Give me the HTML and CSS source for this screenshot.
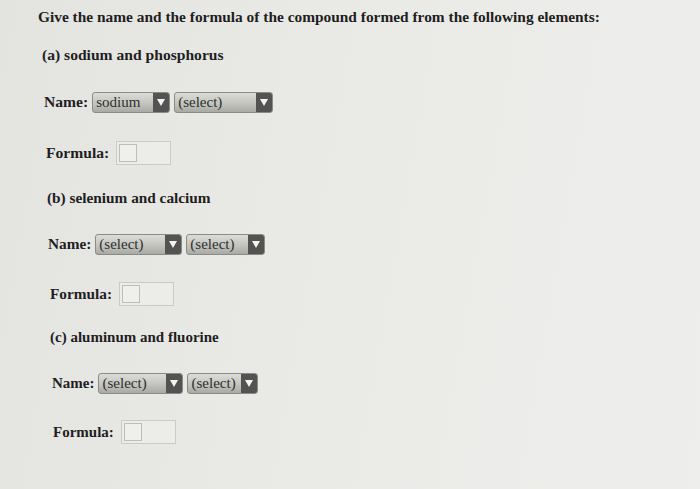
FILE: index.html
```html
<!DOCTYPE html>
<html>
<head>
<meta charset="utf-8">
<link rel="stylesheet" href="styles.css">
</head>
<body>
<div class="page">
  <div class="row r-title">Give the name and the formula of the compound formed from the following elements:</div>

  <div class="row r-part s0">(a) sodium and phosphorus</div>
  <div class="row r-name s1">
    <span class="label">Name:</span>
    <span class="sel w-a1"><span class="txt">sodium</span><span class="arr"></span></span>
    <span class="sel w-a2"><span class="txt">(select)</span><span class="arr"></span></span>
  </div>
  <div class="row r-form s2">
    <span class="label">Formula:</span>
    <span class="fbox"><span class="fin"></span></span>
  </div>

  <div class="row r-part2 s3 small">(b) selenium and calcium</div>
  <div class="row r-name s4 small">
    <span class="label">Name:</span>
    <span class="sel w-b1"><span class="txt">(select)</span><span class="arr"></span></span>
    <span class="sel w-b2"><span class="txt">(select)</span><span class="arr"></span></span>
  </div>
  <div class="row r-form2 s5 small">
    <span class="label">Formula:</span>
    <span class="fbox"><span class="fin"></span></span>
  </div>

  <div class="row r-part3 s6 smaller">(c) aluminum and fluorine</div>
  <div class="row r-name3 s7 smaller">
    <span class="label">Name:</span>
    <span class="sel w-c1"><span class="txt">(select)</span><span class="arr"></span></span>
    <span class="sel w-c2"><span class="txt">(select)</span><span class="arr"></span></span>
  </div>
  <div class="row r-form3 s8 smaller">
    <span class="label">Formula:</span>
    <span class="fbox"><span class="fin"></span></span>
  </div>
</div>
</body>
</html>
```

FILE: styles.css
```css
html, body {
  margin: 0;
  padding: 0;
}
body {
  width: 700px;
  height: 489px;
  overflow: hidden;
  background: linear-gradient(100deg, #e3e3e0 0%, #e9e9e6 40%, #eeeeec 100%);
  font-family: "Liberation Serif", "Times New Roman", serif;
  font-weight: bold;
  color: #1e1e1e;
}
.page {
  display: flex;
  flex-direction: column;
}
.row {
  display: flex;
  align-items: center;
  gap: 4px;
  font-size: 15.6px;
}
.small { font-size: 15.3px; }
.smaller { font-size: 15px; }
.r-title { height: 34px; padding-left: 38px; font-size: 15.4px; }
.r-part { height: 42px; }
.r-name { height: 52px; }
.r-form { height: 50px; }
.r-part2 { height: 40px; }
.r-form2 { height: 48px; }
.r-part3 { height: 38px; }
.r-name3 { height: 54px; }
.r-form3 { height: 44px; }

.s0 { padding-left: 42px; }
.s1 { padding-left: 44px; }
.s2 { padding-left: 46px; }
.s3 { padding-left: 47px; }
.s4 { padding-left: 48px; }
.s5 { padding-left: 50px; }
.s6 { padding-left: 50px; }
.s7 { padding-left: 52px; }
.s8 { padding-left: 53px; }

.sel {
  display: flex;
  align-items: stretch;
  height: 21px;
  box-sizing: border-box;
  border: 1px solid #8a8a86;
  border-radius: 3px;
  overflow: hidden;
  background: linear-gradient(#dcdcd8, #c4c4bf 55%, #aaaaa5);
  font-family: "Liberation Serif", serif;
  font-weight: normal;
  font-size: 15px;
  color: #2e2e2e;
}
.txt {
  flex: 1;
  display: flex;
  align-items: center;
  padding-left: 3px;
  line-height: 1;
}
.arr {
  width: 16px;
  background: #535351;
  position: relative;
}
.arr::after {
  content: "";
  position: absolute;
  left: 4px;
  top: 6px;
  border-left: 4px solid transparent;
  border-right: 4px solid transparent;
  border-top: 7px solid #f4f4f4;
}
.w-a1 { width: 78px; }
.w-a2 { width: 99px; }
.w-b1 { width: 87px; }
.w-b2 { width: 79px; }
.w-c1 { width: 85px; }
.w-c2 { width: 71px; }

.fbox {
  display: flex;
  align-items: center;
  width: 55px;
  height: 24px;
  box-sizing: border-box;
  border: 1px solid #cacac7;
  background: #ecece9;
  padding-left: 2px;
  margin-left: 3px;
}
.fin {
  width: 18px;
  height: 18px;
  box-sizing: border-box;
  border: 1px solid #bdbdba;
  background: #efefec;
}
```
